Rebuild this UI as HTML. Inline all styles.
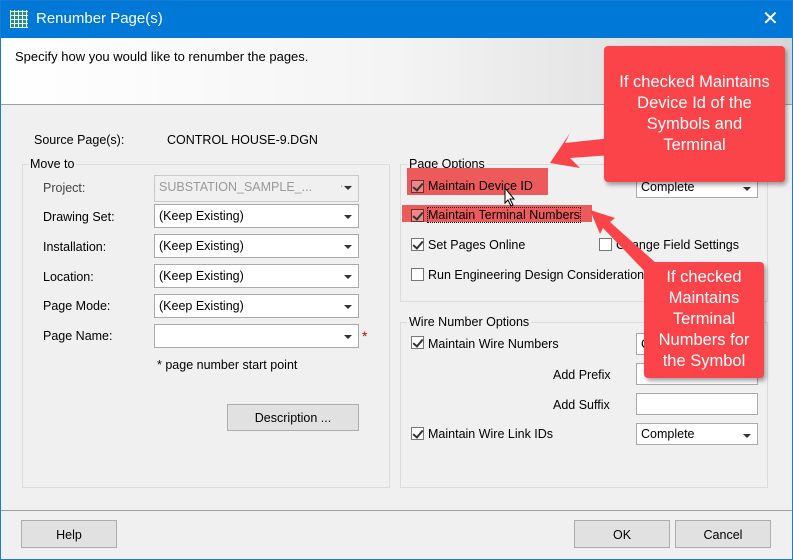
<!DOCTYPE html>
<html><head><style>
*{box-sizing:border-box;margin:0;padding:0}
body{width:793px;height:560px;overflow:hidden;font-family:"Liberation Sans",sans-serif;font-size:12px;color:#000;background:#f0f0f0;position:relative}
.a{position:absolute}
.title{left:0;top:0;width:793px;height:38px;background:#0078d7;color:#fff;font-size:15px}
.hdr{left:1px;top:38px;width:791px;height:67px;background:linear-gradient(90deg,#fff 0%,#f4f4f4 50%,#d6d6d6 100%);border-bottom:1px solid #a0a0a0}
.grp{border:1px solid #dcdcdc}
.lg{background:#f0f0f0;padding:0 2px;font-size:12.5px}
.lbl{font-size:12.5px}
.cb{background:#fff;border:1px solid #aaa;height:24px;padding:4px 4px;font-size:12.5px}
.cb:after{content:"";position:absolute;right:6px;top:10px;border-left:4px solid transparent;border-right:4px solid transparent;border-top:4px solid #333}
.tb{background:#fff;border:1px solid #aaa;height:22px}
.btn{background:#e1e1e1;border:1px solid #adadad;text-align:center;font-size:12.5px}
.chk{width:13px;height:13px;border:1px solid #777;background:#fff}
.chk.on:after{content:"";position:absolute;left:3px;top:0px;width:4px;height:8px;border-right:2px solid #333;border-bottom:2px solid #333;transform:rotate(40deg)}
.hl .chk{background:#e88;border-color:#633}
.call{background:#fa4449;color:#fff;text-align:center;font-size:16.5px;line-height:21px;border-radius:4px;box-shadow:2px 3px 4px rgba(0,0,0,.35)}
</style></head><body>
<div class="a" style="left:0;top:0;width:793px;height:560px;border:1px solid #1a7ad4;z-index:50;pointer-events:none"></div>
<div class="a title"><div class="a" style="left:10px;top:10px;width:18px;height:18px;background:#2a8a8a;background-image:repeating-linear-gradient(90deg,#e8f4f4 0 1px,transparent 1px 4px),repeating-linear-gradient(0deg,#e8f4f4 0 1px,transparent 1px 4px)"></div><div class="a" style="left:36px;top:10px">Renumber Page(s)</div><div class="a" style="left:762px;top:6px;font-size:20px">✕</div></div>
<div class="a hdr"><div class="a" style="left:14px;top:11px;font-size:13px">Specify how you would like to renumber the pages.</div></div>

<div class="a lbl" style="left:34px;top:133px">Source Page(s):</div>
<div class="a lbl" style="left:167px;top:133px">CONTROL HOUSE-9.DGN</div>

<div class="a grp" style="left:22px;top:164px;width:368px;height:324px"></div>
<div class="a lg" style="left:28px;top:157px">Move to</div>
<div class="a lbl" style="left:43px;top:181px;color:#444">Project:</div>
<div class="a cb" style="left:154px;top:175px;width:205px;height:27px;background:#f0f0f0;color:#999;border-color:#c8c8c8">SUBSTATION_SAMPLE_...<span class="a" style="right:6px;top:3px;color:#aaa">···</span></div>
<div class="a lbl" style="left:43px;top:210px">Drawing Set:</div><div class="a cb" style="left:154px;top:204px;width:205px">(Keep Existing)</div>
<div class="a lbl" style="left:43px;top:240px">Installation:</div><div class="a cb" style="left:154px;top:234px;width:205px">(Keep Existing)</div>
<div class="a lbl" style="left:43px;top:270px">Location:</div><div class="a cb" style="left:154px;top:264px;width:205px">(Keep Existing)</div>
<div class="a lbl" style="left:43px;top:299px">Page Mode:</div><div class="a cb" style="left:154px;top:294px;width:205px">(Keep Existing)</div>
<div class="a lbl" style="left:43px;top:329px">Page Name:</div><div class="a cb" style="left:154px;top:324px;width:205px"></div>
<div class="a" style="left:362px;top:328px;color:#d00;font-size:14px">*</div>
<div class="a lbl" style="left:157px;top:358px">* page number start point</div>
<div class="a btn" style="left:227px;top:404px;width:132px;height:27px;padding-top:6px">Description ...</div>

<div class="a grp" style="left:400px;top:164px;width:368px;height:138px"></div>
<div class="a lg" style="left:407px;top:157px">Page Options</div>
<div class="a" style="left:407px;top:168px;width:141px;height:27px;background:#ec5a5c"></div>
<div class="a" style="left:402px;top:205px;width:190px;height:17px;background:#ec5a5c"></div>
<div class="hl"><div class="a chk on" style="left:411px;top:180px"></div></div><div class="a lbl" style="left:428px;top:179px">Maintain Device ID</div>
<div class="a cb" style="left:636px;top:176px;width:122px;height:22px;padding-top:3px">Complete</div>
<div class="hl"><div class="a chk on" style="left:411px;top:209px"></div></div><div class="a lbl" style="left:428px;top:208px;outline:1px dotted #000">Maintain Terminal Numbers</div>
<div class="a chk on" style="left:411px;top:238px"></div><div class="a lbl" style="left:428px;top:238px">Set Pages Online</div>
<div class="a chk" style="left:599px;top:238px"></div><div class="a lbl" style="left:616px;top:238px">Change Field Settings</div>
<div class="a chk" style="left:411px;top:268px"></div><div class="a lbl" style="left:428px;top:268px">Run Engineering Design Considerations</div>

<div class="a grp" style="left:400px;top:322px;width:368px;height:166px"></div>
<div class="a lg" style="left:407px;top:315px">Wire Number Options</div>
<div class="a chk on" style="left:411px;top:336px"></div><div class="a lbl" style="left:428px;top:337px">Maintain Wire Numbers</div>
<div class="a cb" style="left:636px;top:333px;width:122px;height:22px;padding-top:3px">Complete</div>
<div class="a lbl" style="left:553px;top:368px">Add Prefix</div><div class="a tb" style="left:636px;top:363px;width:122px"></div>
<div class="a lbl" style="left:553px;top:398px">Add Suffix</div><div class="a tb" style="left:636px;top:393px;width:122px"></div>
<div class="a chk on" style="left:411px;top:427px"></div><div class="a lbl" style="left:428px;top:427px">Maintain Wire Link IDs</div>
<div class="a cb" style="left:636px;top:423px;width:122px;height:22px;padding-top:3px">Complete</div>

<div class="a" style="left:1px;top:510px;width:791px;border-top:1px solid #a0a0a0"></div>
<div class="a btn" style="left:21px;top:520px;width:96px;height:28px;padding-top:7px">Help</div>
<div class="a btn" style="left:574px;top:520px;width:96px;height:28px;padding-top:7px">OK</div>
<div class="a btn" style="left:675px;top:520px;width:96px;height:28px;padding-top:7px">Cancel</div>

<svg class="a" style="left:0;top:0" width="793" height="560">
<polygon points="612,138 565,143 570,133 550,163 580,168 570,158 612,155" fill="#fa4449"/>
<polygon points="666,272 610,222 615,218 590,210 600,234 603,228 655,282" fill="#fa4449"/>
<path d="M505 188 L505 203 L508 200 L511 206 L513 205 L510 199 L514 199 Z" fill="#fff" stroke="#000" stroke-width="1"/>
</svg>
<div class="a call" style="left:604px;top:46px;width:181px;height:136px;padding-top:26px">If checked Maintains<br>Device Id of the<br>Symbols and<br>Terminal</div>
<div class="a call" style="left:644px;top:262px;width:120px;height:116px;padding-top:5px">If checked<br>Maintains<br>Terminal<br>Numbers for<br>the Symbol</div>
</body></html>
